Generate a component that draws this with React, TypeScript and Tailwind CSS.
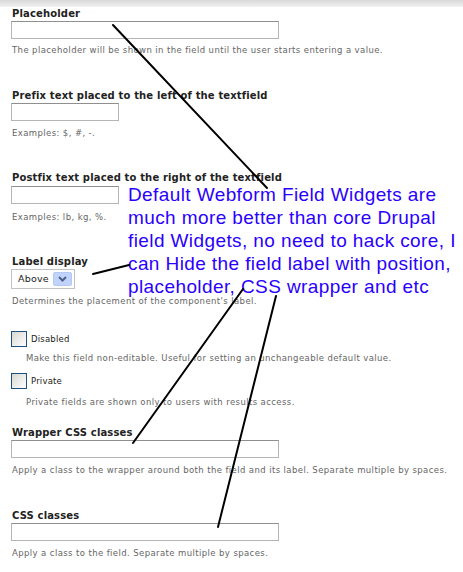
import React from "react";

const FONT = { fontFamily: '"DejaVu Sans", Verdana, sans-serif' };

function Label({ children }: { children: React.ReactNode }) {
  return (
    <div className="text-[10px] leading-[12px] font-bold text-[#222] tracking-[0.15px] pl-[1px]">{children}</div>
  );
}

function Desc({ children, className = "" }: { children: React.ReactNode; className?: string }) {
  return (
    <div className={`text-[8.5px] leading-[12px] tracking-[0.4px] text-[#666] whitespace-nowrap ${className}`}>
      {children}
    </div>
  );
}

function TextInput({ w }: { w: string }) {
  return <div className={`h-[18px] ${w} border border-[#b5b5b5] border-t-[#8f8f8f] bg-white`} />;
}

function Checkbox() {
  return (
    <div className="w-[16px] h-[16px] border border-[#1c5180] bg-gradient-to-br from-[#d8d8d2] to-white" />
  );
}

export default function App() {
  return (
    <div className="relative w-[463px] h-[572px] bg-white overflow-hidden" style={FONT}>
      <div className="h-[7px] bg-gradient-to-b from-[#d9d9d9] to-[#f2f2f2]" />

      <div className="pl-[11px] pt-[1px]">
        <Label>Placeholder</Label>
        <div className="mt-[1px]"><TextInput w="w-[268px]" /></div>
        <Desc className="mt-[5px] pl-[1px]">The placeholder will be shown in the field until the user starts entering a value.</Desc>

        <div className="mt-[34px]"><Label>Prefix text placed to the left of the textfield</Label></div>
        <div className="mt-[1px]"><TextInput w="w-[108px]" /></div>
        <Desc className="mt-[6px] pl-[1px]">Examples: $, #, -.</Desc>

        <div className="mt-[33px]"><Label>Postfix text placed to the right of the textfield</Label></div>
        <div className="mt-[2px]"><TextInput w="w-[108px]" /></div>
        <Desc className="mt-[7px] pl-[1px]">Examples: lb, kg, %.</Desc>

        <div className="mt-[33px]"><Label>Label display</Label></div>
        <div className="mt-[1px] flex items-center w-[64px] h-[20px] border border-[#c3c3c3] bg-white">
          <span className="pl-[6px] text-[9.5px] tracking-[0.2px] text-[#222] flex-1">Above</span>
          <span className="mr-[2px] w-[19px] h-[14px] rounded-[2px] bg-[#c1d3fb] border border-[#b4c8f6] flex items-center justify-center">
            <svg width="9" height="6" viewBox="0 0 9 6">
              <path d="M1 1 L4.5 4.5 L8 1" stroke="#4d6185" strokeWidth="2" fill="none" />
            </svg>
          </span>
        </div>
        <Desc className="mt-[6px] pl-[1px]">Determines the placement of the component's label.</Desc>

        <div className="mt-[24px] flex items-center gap-[4px]">
          <Checkbox />
          <span className="text-[8.5px] tracking-[0.2px] text-[#222]">Disabled</span>
        </div>
        <Desc className="mt-[5px] pl-[15px]">Make this field non-editable. Useful for setting an unchangeable default value.</Desc>

        <div className="mt-[9px] flex items-center gap-[4px]">
          <Checkbox />
          <span className="text-[8.5px] tracking-[0.2px] text-[#222]">Private</span>
        </div>
        <Desc className="mt-[7px] pl-[15px]">Private fields are shown only to users with results access.</Desc>

        <div className="mt-[19px]"><Label>Wrapper CSS classes</Label></div>
        <div className="mt-[1px]"><TextInput w="w-[268px]" /></div>
        <Desc className="mt-[6px] pl-[1px]">Apply a class to the wrapper around both the field and its label. Separate multiple by spaces.</Desc>

        <div className="mt-[34px]"><Label>CSS classes</Label></div>
        <div className="mt-[1px]"><TextInput w="w-[268px]" /></div>
        <Desc className="mt-[6px] pl-[1px]">Apply a class to the field. Separate multiple by spaces.</Desc>
      </div>

      <div
        className="absolute left-[128px] top-[183px] text-[19px] leading-[23px] tracking-[0.4px] text-[#2a00ff] whitespace-nowrap"
        style={{ fontFamily: '"Liberation Sans", Arial, sans-serif' }}
      >
        Default Webform Field Widgets are<br />
        much more better than core Drupal<br />
        field Widgets, no need to hack core, I<br />
        can Hide the field label with position,<br />
        placeholder, CSS wrapper and etc
      </div>

      <svg className="absolute inset-0 pointer-events-none" width="463" height="572">
        <g stroke="#000" strokeWidth="2" strokeLinecap="round">
          <line x1="113" y1="25" x2="267" y2="188" />
          <line x1="93" y1="274" x2="129" y2="265" />
          <line x1="243" y1="289" x2="133" y2="443" />
          <line x1="276" y1="296" x2="218" y2="527" />
        </g>
      </svg>
    </div>
  );
}
